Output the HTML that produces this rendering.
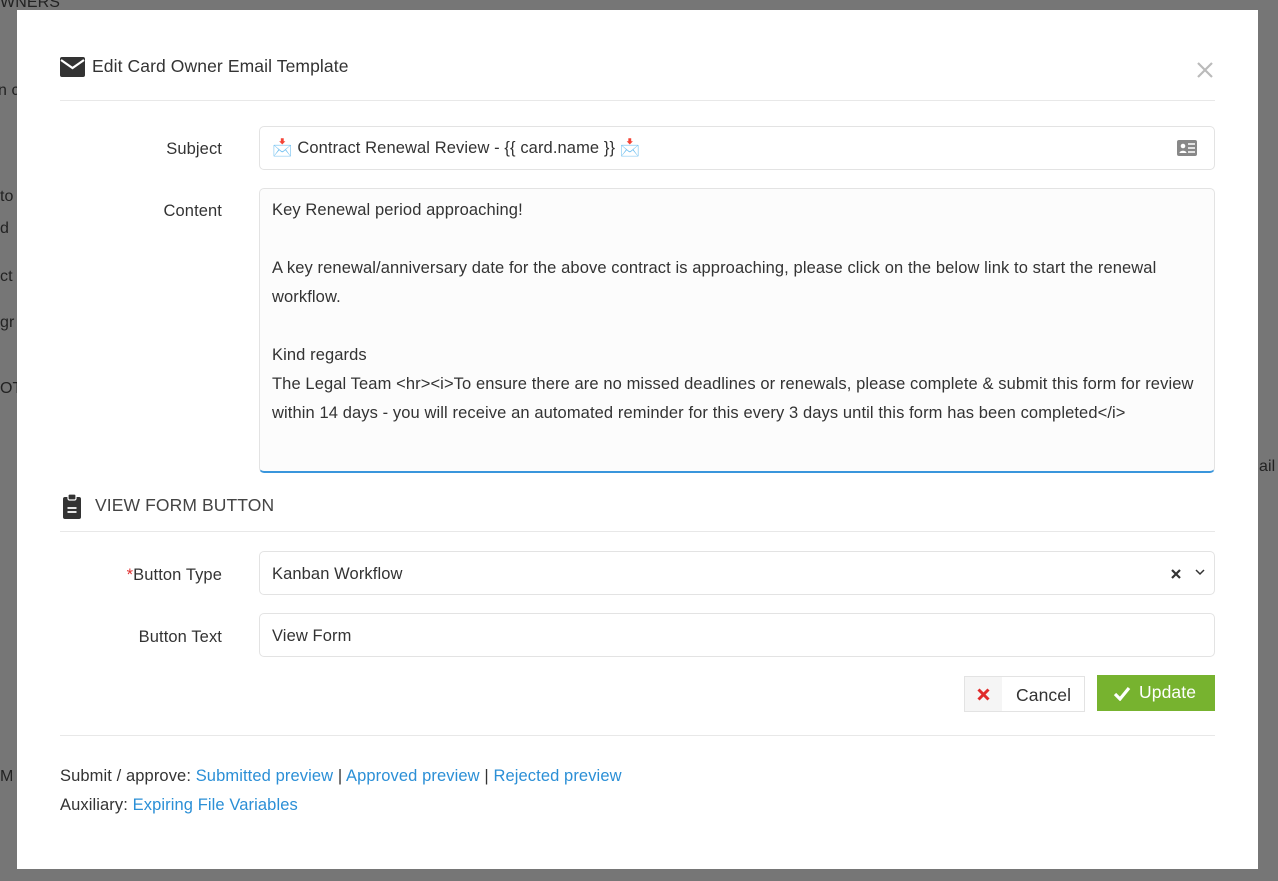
<!DOCTYPE html>
<html><head><meta charset="utf-8"><style>
*{box-sizing:border-box;margin:0;padding:0}
body{width:1278px;height:881px;background:#767676;font-family:"Liberation Sans","DejaVu Sans",sans-serif;color:#333;position:relative;overflow:hidden;font-size:16.5px;letter-spacing:0.1px}
.bg{position:absolute;color:#222;font-size:16px}
.modal{position:absolute;left:17px;top:10px;width:1241px;height:859px;background:#fff}
.abs{position:absolute;white-space:nowrap}
.lbl{position:absolute;right:1036px;color:#333;text-align:right;white-space:nowrap}
.inp{position:absolute;left:242px;width:956px;border:1px solid #e3e3e3;border-radius:5px;background:#fff}
.hr{position:absolute;left:43px;width:1155px;height:1px;background:#e8e8e8}
a{color:#2b8fd6;text-decoration:none}
</style></head><body>
<div class="bg" style="left:0;top:-6px">WNERS</div>
<div class="bg" style="left:-2px;top:82px">n c</div>
<div class="bg" style="left:0;top:188px">to</div>
<div class="bg" style="left:0;top:220px">d</div>
<div class="bg" style="left:0;top:268px">ct</div>
<div class="bg" style="left:0;top:314px">gr</div>
<div class="bg" style="left:0;top:380px">OT</div>
<div class="bg" style="left:0;top:768px">M</div>
<div class="bg" style="left:1259px;top:458px">ail</div>
<div class="modal">
 <svg class="abs" style="left:43px;top:47px" width="25" height="20" viewBox="0 0 25 20"><rect x="0" y="0" width="25" height="20" rx="2" fill="#333"/><path d="M1 3 L12.5 11 L24 3" stroke="#fff" stroke-width="2.2" fill="none"/></svg>
 <div class="abs" style="left:75px;top:46px;font-size:17.5px;color:#333">Edit Card Owner Email Template</div>
 <svg class="abs" style="left:1180px;top:52px" width="16" height="16" viewBox="0 0 16 16"><path d="M1 1L15 15M15 1L1 15" stroke="#bbb" stroke-width="2.2"/></svg>
 <div class="hr" style="top:90px"></div>

 <div class="lbl" style="top:130px">Subject</div>
 <div class="inp" style="top:116px;height:44px">
  <div class="abs" style="left:12px;top:12px">📩 Contract Renewal Review - {{ card.name }} 📩</div>
  <svg class="abs" style="left:917px;top:13px" width="20" height="16" viewBox="0 0 20 16"><rect width="20" height="16" rx="2" fill="#888"/><circle cx="6" cy="6" r="2.3" fill="#fff"/><path d="M2.5 13c0-3 7-3 7 0z" fill="#fff"/><path d="M11 4h7M11 8h7M11 12h7" stroke="#fff" stroke-width="1.6"/></svg>
 </div>

 <div class="lbl" style="top:192px">Content</div>
 <div class="inp" style="top:178px;height:285px;background:#fcfcfc;border-bottom:2px solid #3a96dc;line-height:29px;padding:7px 12px;white-space:nowrap">
  Key Renewal period approaching!<br><br>
  A key renewal/anniversary date for the above contract is approaching, please click on the below link to start the renewal<br>workflow.<br><br>
  Kind regards<br>
  The Legal Team &lt;hr&gt;&lt;i&gt;To ensure there are no missed deadlines or renewals, please complete &amp; submit this form for review<br>within 14 days - you will receive an automated reminder for this every 3 days until this form has been completed&lt;/i&gt;
 </div>

 <svg class="abs" style="left:46px;top:484px" width="18" height="25" viewBox="0 0 18 25"><rect x="0" y="3" width="18" height="22" rx="2" fill="#333"/><rect x="5" y="0" width="8" height="6" rx="1.5" fill="#333" stroke="#fff" stroke-width="1.2"/><path d="M4.5 14h9M4.5 18h9" stroke="#fff" stroke-width="1.8"/></svg>
 <div class="abs" style="left:78px;top:485px;font-size:17.5px;color:#444">VIEW FORM BUTTON</div>
 <div class="hr" style="top:521px"></div>

 <div class="lbl" style="top:556px"><span style="color:#e03030">*</span>Button Type</div>
 <div class="inp" style="top:541px;height:44px">
  <div class="abs" style="left:12px;top:13px">Kanban Workflow</div>
  <svg class="abs" style="left:911px;top:17px" width="10" height="10" viewBox="0 0 10 10"><path d="M1 1L9 9M9 1L1 9" stroke="#333" stroke-width="2.2"/></svg>
  <svg class="abs" style="left:935px;top:17px" width="10" height="7" viewBox="0 0 10 7"><path d="M1 1L5 5L9 1" stroke="#333" stroke-width="1.5" fill="none"/></svg>
 </div>
 <div class="lbl" style="top:618px">Button Text</div>
 <div class="inp" style="top:603px;height:44px">
  <div class="abs" style="left:12px;top:13px">View Form</div>
 </div>

 <div class="abs" style="left:947px;top:666px;width:121px;height:36px;border:1px solid #e3e3e3;background:#fff">
  <div class="abs" style="left:0;top:0;width:37px;height:34px;background:#f5f5f5"></div>
  <svg class="abs" style="left:12px;top:11px" width="13" height="13" viewBox="0 0 13 13"><path d="M1.5 1.5L11.5 11.5M11.5 1.5L1.5 11.5" stroke="#e02a2a" stroke-width="3"/></svg>
  <div class="abs" style="left:51px;top:8px;font-size:17.5px;color:#333">Cancel</div>
 </div>
 <div class="abs" style="left:1080px;top:665px;width:118px;height:36px;background:#77b32f">
  <svg class="abs" style="left:16px;top:11px" width="18" height="15" viewBox="0 0 18 15"><path d="M2 8L7 13L16 2" stroke="#fff" stroke-width="3.2" fill="none"/></svg>
  <div class="abs" style="left:42px;top:7px;font-size:17.5px;color:#fff">Update</div>
 </div>
 <div class="hr" style="top:725px"></div>

 <div class="abs" style="left:43px;top:757px">Submit / approve: <a>Submitted preview</a> | <a>Approved preview</a> | <a>Rejected preview</a></div>
 <div class="abs" style="left:43px;top:786px">Auxiliary: <a>Expiring File Variables</a></div>
</div>
</body></html>
